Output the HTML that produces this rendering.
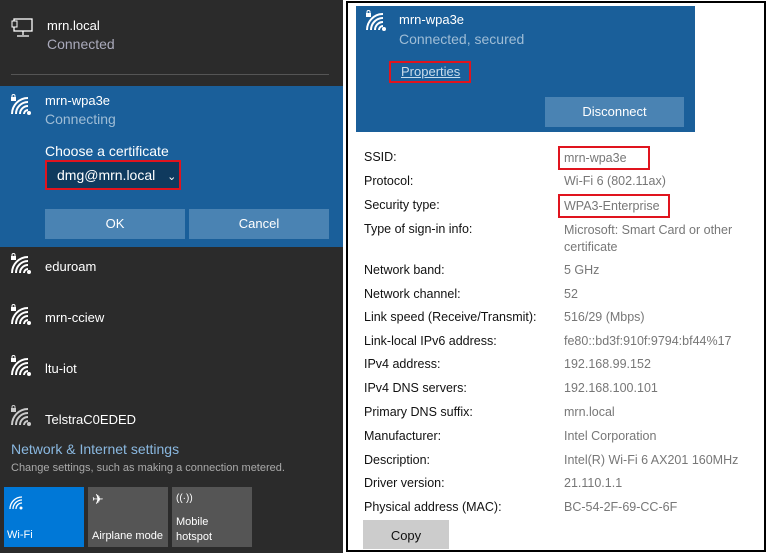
<!DOCTYPE html><html><head><style>
body{margin:0;width:767px;height:553px;background:#fff;position:relative;overflow:hidden;font-family:"Liberation Sans",sans-serif}
.a{position:absolute;white-space:nowrap}
#L{position:absolute;left:0;top:0;width:343px;height:553px;background:#2b2b2b}
.w{color:#fff;font-size:13px}
.g{color:#aab;font-size:14px}
.btn{position:absolute;background:#4a83b3;color:#fff;font-size:13px;text-align:center}
.lab{position:absolute;left:364px;font-size:12.5px;color:#111}
.val{position:absolute;left:564px;font-size:12.5px;color:#777}
.red{position:absolute;border:2px solid #e0141e}
</style></head><body>
<svg width="0" height="0" style="position:absolute"><defs>
<g id="wf"><path d="M2 21A16 16 0 0 1 18 5M6 21A12 12 0 0 1 18 9M10 21A8 8 0 0 1 18 13M14 21A4 4 0 0 1 18 17" stroke="#fff" stroke-width="2" fill="none"/><circle cx="19" cy="20" r="2" fill="#fff"/><rect x="1" y="4" width="5" height="4" fill="#fff"/><path d="M2 4.5V3a1.5 1.5 0 0 1 3 0v1.5" stroke="#fff" fill="none"/></g>
</defs></svg>
<div id="L">
<svg class="a" style="left:11px;top:18px" width="24" height="20"><rect x="3" y="1" width="18" height="12" fill="none" stroke="#fff" stroke-width="1.3"/><path d="M12 13v4M6 18h12" stroke="#fff" stroke-width="1.3"/><rect x="1" y="3" width="5" height="6" fill="#2b2b2b" stroke="#fff"/></svg>
<div class="a w" style="left:47px;top:18px">mrn.local</div>
<div class="a g" style="left:47px;top:36px">Connected</div>
<div class="a" style="left:11px;top:74px;width:318px;height:1px;background:#555"></div>
<div class="a" style="left:0;top:86px;width:343px;height:161px;background:#1a5f9a"></div>
<svg class="a" style="left:10px;top:93px" width="24" height="24"><use href="#wf"/></svg>
<div class="a w" style="left:45px;top:93px">mrn-wpa3e</div>
<div class="a g" style="left:45px;top:111px;color:#9fbdd6">Connecting</div>
<div class="a" style="left:45px;top:143px;color:#fff;font-size:14px">Choose a certificate</div>
<div class="a" style="left:45px;top:160px;width:136px;height:30px;background:#0f3a5e;border:2px solid #e0141e;box-sizing:border-box;color:#fff;font-size:14px;line-height:26px;padding-left:10px">dmg@mrn.local <span style="margin-left:8px;font-size:11px">&#8964;</span></div>
<div class="btn" style="left:45px;top:209px;width:140px;height:30px;line-height:30px">OK</div>
<div class="btn" style="left:189px;top:209px;width:140px;height:30px;line-height:30px">Cancel</div>
<svg class="a" style="left:10px;top:252px" width="24" height="24"><use href="#wf"/></svg>
<div class="a w" style="left:45px;top:259px">eduroam</div>
<svg class="a" style="left:10px;top:303px" width="24" height="24"><use href="#wf"/></svg>
<div class="a w" style="left:45px;top:310px">mrn-cciew</div>
<svg class="a" style="left:10px;top:354px" width="24" height="24"><use href="#wf"/></svg>
<div class="a w" style="left:45px;top:361px">ltu-iot</div>
<svg class="a" style="left:10px;top:404px" width="24" height="24" opacity=".75"><use href="#wf"/></svg>
<div class="a w" style="left:45px;top:412px">TelstraC0EDED</div>
<div class="a" style="left:11px;top:441px;color:#8ab8e0;font-size:14px">Network &amp; Internet settings</div>
<div class="a" style="left:11px;top:462px;color:#aaa;font-size:11px">Change settings, such as making a connection metered.</div>
<div class="a" style="left:4px;top:487px;width:80px;height:60px;background:#0078d7"></div>
<div class="a" style="left:88px;top:487px;width:80px;height:60px;background:#555"></div>
<div class="a" style="left:172px;top:487px;width:80px;height:60px;background:#555"></div>
<svg class="a" style="left:9px;top:496px" width="14" height="14"><path d="M1 13A12 12 0 0 1 13 1M4 13A9 9 0 0 1 13 4M7 13A6 6 0 0 1 13 7" stroke="#fff" stroke-width="1.3" fill="none"/><circle cx="12" cy="12" r="1.5" fill="#fff"/></svg>
<div class="a" style="left:7px;top:529px;color:#fff;font-size:11px">Wi-Fi</div>
<div class="a" style="left:92px;top:491px;color:#fff;font-size:14px">&#9992;</div>
<div class="a" style="left:92px;top:530px;color:#fff;font-size:11px">Airplane mode</div>
<div class="a" style="left:176px;top:493px;color:#fff;font-size:10px">((&#183;))</div>
<div class="a" style="left:176px;top:515px;color:#fff;font-size:11px;line-height:15px">Mobile<br>hotspot</div>
</div>
<div class="a" style="left:346px;top:1px;width:416px;height:547px;border:2px solid #000"></div>
<div class="a" style="left:356px;top:6px;width:339px;height:126px;background:#1a5f9a"></div>
<svg class="a" style="left:365px;top:9px" width="24" height="24"><use href="#wf"/></svg>
<div class="a w" style="left:399px;top:12px">mrn-wpa3e</div>
<div class="a g" style="left:399px;top:31px;color:#9fbdd6">Connected, secured</div>
<div class="red" style="left:389px;top:61px;width:78px;height:18px"></div>
<div class="a" style="left:401px;top:64px;color:#c9dcec;font-size:13px;text-decoration:underline">Properties</div>
<div class="btn" style="left:545px;top:97px;width:139px;height:30px;line-height:30px">Disconnect</div>
<div class="red" style="left:558px;top:146px;width:88px;height:20px"></div>
<div class="red" style="left:558px;top:194px;width:108px;height:20px"></div>
<div class="lab" style="top:150px">SSID:</div><div class="val" style="top:151px">mrn-wpa3e</div>
<div class="lab" style="top:174px">Protocol:</div><div class="val" style="top:174px">Wi-Fi 6 (802.11ax)</div>
<div class="lab" style="top:198px">Security type:</div><div class="val" style="top:199px">WPA3-Enterprise</div>
<div class="lab" style="top:222px">Type of sign-in info:</div><div class="val" style="top:222px;line-height:17px">Microsoft: Smart Card or other<br>certificate</div>
<div class="lab" style="top:263px">Network band:</div><div class="val" style="top:263px">5 GHz</div>
<div class="lab" style="top:287px">Network channel:</div><div class="val" style="top:287px">52</div>
<div class="lab" style="top:310px">Link speed (Receive/Transmit):</div><div class="val" style="top:310px">516/29 (Mbps)</div>
<div class="lab" style="top:334px">Link-local IPv6 address:</div><div class="val" style="top:334px">fe80::bd3f:910f:9794:bf44%17</div>
<div class="lab" style="top:357px">IPv4 address:</div><div class="val" style="top:357px">192.168.99.152</div>
<div class="lab" style="top:381px">IPv4 DNS servers:</div><div class="val" style="top:381px">192.168.100.101</div>
<div class="lab" style="top:405px">Primary DNS suffix:</div><div class="val" style="top:405px">mrn.local</div>
<div class="lab" style="top:429px">Manufacturer:</div><div class="val" style="top:429px">Intel Corporation</div>
<div class="lab" style="top:453px">Description:</div><div class="val" style="top:453px">Intel(R) Wi-Fi 6 AX201 160MHz</div>
<div class="lab" style="top:476px">Driver version:</div><div class="val" style="top:476px">21.110.1.1</div>
<div class="lab" style="top:500px">Physical address (MAC):</div><div class="val" style="top:500px">BC-54-2F-69-CC-6F</div>
<div class="a" style="left:363px;top:520px;width:86px;height:29px;background:#ccc;color:#111;font-size:13px;text-align:center;line-height:31px">Copy</div>
</body></html>
